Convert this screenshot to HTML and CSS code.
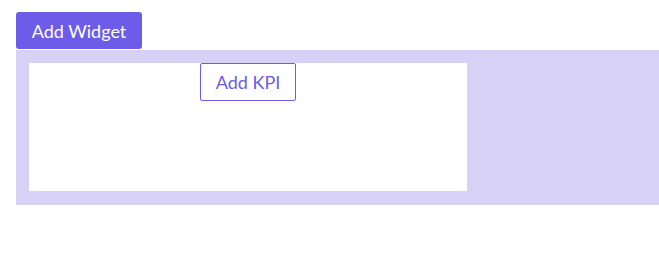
FILE: index.html
```html
<!DOCTYPE html>
<html>
<head>
<meta charset="utf-8">
<link rel="stylesheet" href="styles.css">
</head>
<body>
  <div class="page">
    <button class="btn-primary">Add Widget</button>
    <div class="board">
      <div class="card">
        <button class="btn-outline">Add KPI</button>
      </div>
    </div>
  </div>
</body>
</html>
```
FILE: styles.css
```css
html, body {
  margin: 0;
  padding: 0;
  background: #ffffff;
}
.page {
  padding: 12px 0 0 16px;
  font-family: Lato, "Open Sans", sans-serif;
}
.btn-primary {
  display: block;
  width: 126px;
  height: 37px;
  margin: 0 0 1px 0;
  padding: 0;
  border: none;
  border-radius: 3px;
  background: #6c5ce7;
  color: #ffffff;
  font-family: inherit;
  font-size: 18px;
}
.board {
  height: 155px;
  box-sizing: border-box;
  padding: 13px;
  background: #d7d1f5;
}
.card {
  width: 438px;
  height: 128px;
  background: #ffffff;
  display: flex;
  justify-content: center;
  align-items: flex-start;
}
.btn-outline {
  width: 96px;
  height: 38px;
  padding: 0;
  border: 1px solid #6c5ce7;
  border-radius: 2px;
  background: #ffffff;
  color: #6c5ce7;
  font-family: inherit;
  font-size: 18px;
}
```
